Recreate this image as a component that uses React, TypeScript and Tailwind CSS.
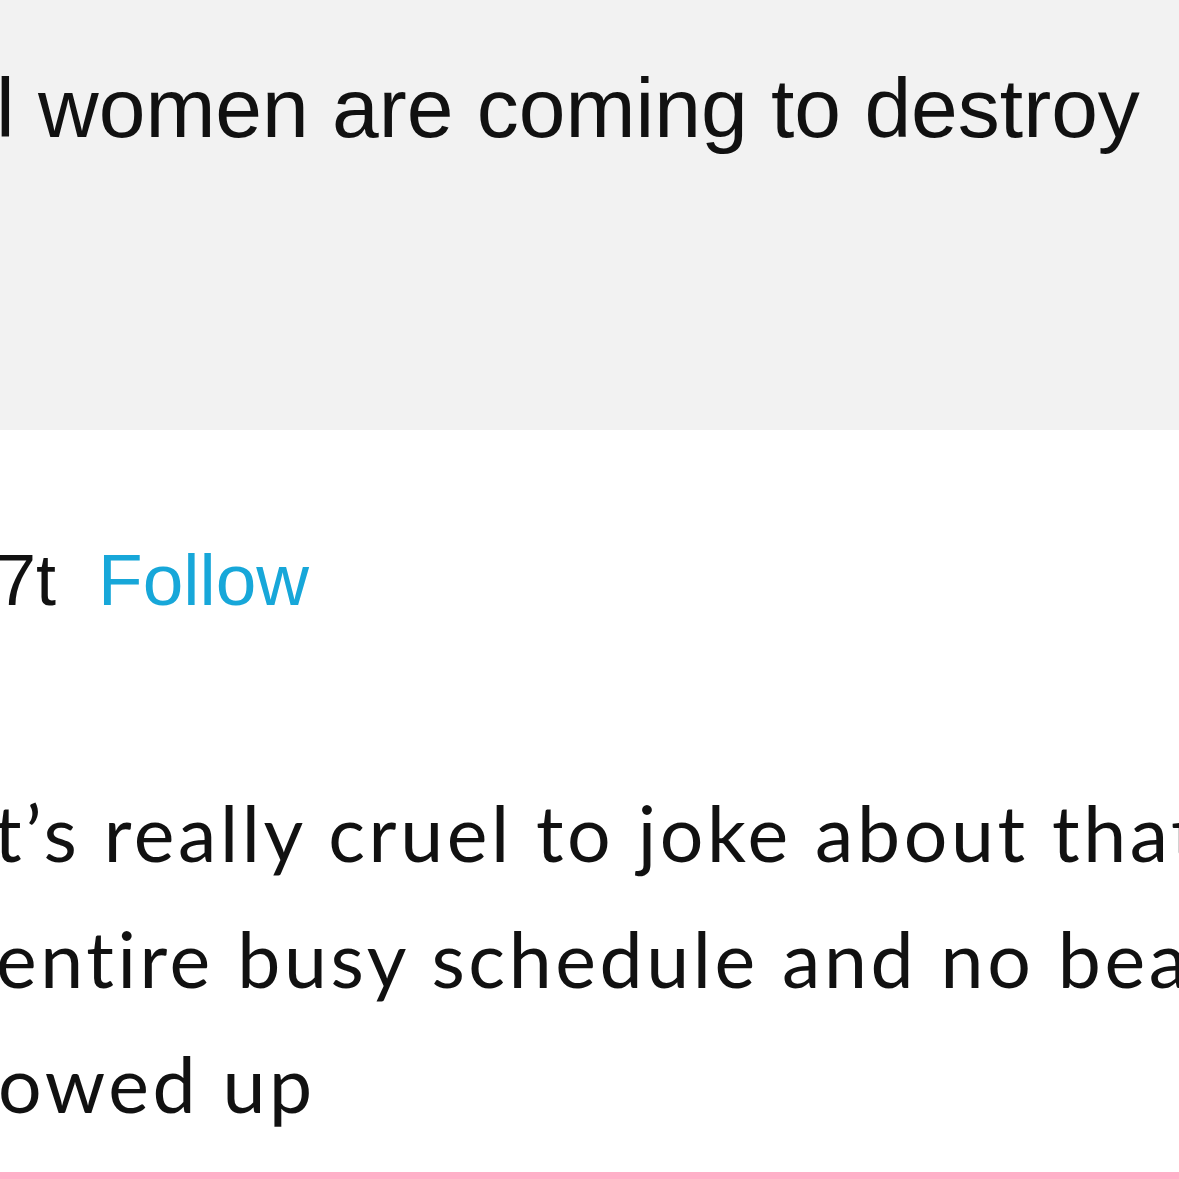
export default function App() {
  return (
    <div className="w-[1179px] h-[1179px] overflow-hidden bg-white flex flex-col">
      <div className="h-[430px] shrink-0 bg-[#f2f2f2] pt-[67px]">
        <p className="whitespace-nowrap ml-[-4px] text-[84px] leading-[83px] text-[#111]" style={{ fontFamily: '"Liberation Sans", Arial, sans-serif' }}>
          l women are coming to destroy
        </p>
      </div>
      <div className="pt-[114px] flex items-start" style={{ fontFamily: '"Liberation Sans", Arial, sans-serif' }}>
        <span className="ml-[-4px] text-[72px] leading-[72px] text-[#111] whitespace-nowrap">7t</span>
        <span className="ml-[42px] text-[73px] leading-[72px] text-[#17a7d9] whitespace-nowrap">Follow</span>
      </div>
      <div className="mt-[154px] text-[77px] leading-[125.5px] text-[#111] tracking-[3.6px] whitespace-nowrap" style={{ fontFamily: 'Lato, "Open Sans", sans-serif' }}>
        <div className="ml-[-6px]">t’s really cruel to joke about that</div>
        <div className="ml-[-4px]">entire busy schedule and no beauty</div>
        <div className="ml-[-2px]">owed up</div>
      </div>
      <div className="mt-auto h-[7px] bg-[#ffb0c8]" />
    </div>
  );
}
